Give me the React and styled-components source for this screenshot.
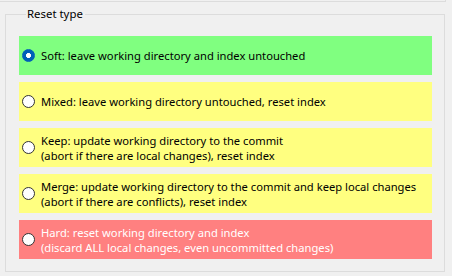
import React from 'react';
import styled, { createGlobalStyle } from 'styled-components';

const GlobalStyle = createGlobalStyle`
    html, body {
        margin: 0;
        padding: 0;
        background: #f0f0f0;
    }
    body {
        font-family: "Noto Sans", "DejaVu Sans", sans-serif;
        font-size: 11.2px;
        color: #000;
    }
`;

const Page = styled.div`
    width: 452px;
    height: 276px;
    overflow: hidden;
`;

const TopFrame = styled.div`
    width: 445px;
    height: 1px;
    border-bottom: 1px solid #dcdcdc;
    border-right: 1px solid #dcdcdc;
`;

const Group = styled.fieldset`
    margin: 4px 0 0 5px;
    padding: 14px 12px 12px 13px;
    width: 440px;
    min-width: 0;
    box-sizing: border-box;
    border: 1px solid #dcdcdc;
    display: flex;
    flex-direction: column;
    gap: 7px;
`;

const Legend = styled.legend`
    margin-left: 7px;
    padding: 0 2px 0 1px;
    line-height: 16px;
    font-size: 11.4px;
`;

const colors = {
    green: '#80ff80',
    yellow: '#ffff80',
    red: '#ff8080',
};

const Option = styled.label`
    height: 39px;
    box-sizing: border-box;
    background: ${(p) => colors[p.$tone]};
    color: ${(p) => (p.$tone === 'red' ? '#fff' : '#000')};
    display: flex;
    align-items: center;
    padding-left: 3px;
    gap: 6px;
    cursor: default;
    overflow: hidden;
`;

const Radio = styled.span`
    flex: none;
    width: 13px;
    height: 13px;
    box-sizing: border-box;
    border-radius: 50%;
    border: 1px solid ${(p) => (p.$checked ? '#005fb8' : '#333')};
    background: ${(p) => (p.$checked
        ? 'radial-gradient(circle, #fff 0 2.2px, #005fb8 2.8px)'
        : '#fff')};
`;

const Text = styled.span`
    line-height: 15px;
    white-space: nowrap;
`;

const options = [
    { tone: 'green', checked: true, lines: ['Soft: leave working directory and index untouched'] },
    { tone: 'yellow', lines: ['Mixed: leave working directory untouched, reset index'] },
    { tone: 'yellow', lines: ['Keep: update working directory to the commit', '(abort if there are local changes), reset index'] },
    { tone: 'yellow', lines: ['Merge: update working directory to the commit and keep local changes', '(abort if there are conflicts), reset index'] },
    { tone: 'red', lines: ['Hard: reset working directory and index', '(discard ALL local changes, even uncommitted changes)'] },
];

const App = () => (
    <Page>
        <GlobalStyle />
        <TopFrame />
        <Group>
            <Legend>Reset type</Legend>
            {options.map((o) => (
                <Option key={o.lines[0]} $tone={o.tone}>
                    <Radio $checked={o.checked} />
                    <Text>
                        {o.lines.map((l) => <div key={l}>{l}</div>)}
                    </Text>
                </Option>
            ))}
        </Group>
    </Page>
);

export default App;
